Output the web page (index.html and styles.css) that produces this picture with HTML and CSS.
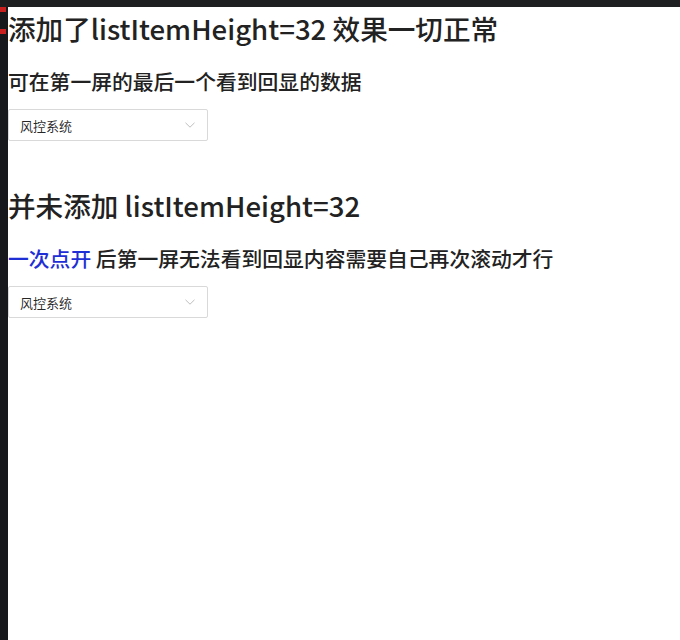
FILE: index.html
```html
<!DOCTYPE html>
<html lang="zh-CN">
<head>
    <meta charset="UTF-8">
    <meta name="viewport" content="width=device-width, initial-scale=1.0">
    <title>listItemHeight demo</title>
    <link rel="stylesheet" href="styles.css">
</head>
<body>
    <div class="top-bar"></div>

    <div class="frame">
        <div class="side-rail">
            <span class="rail-mark rail-mark-first"></span>
            <span class="rail-mark"></span>
        </div>

        <div class="main">
            <h2 class="demo-title">添加了listItemHeight=32 效果一切正常</h2>
            <h3 class="demo-desc">可在第一屏的最后一个看到回显的数据</h3>
            <div class="select">
                <span class="select-value">风控系统</span>
                <svg class="select-arrow" width="12" height="12" viewBox="0 0 12 12">
                    <path d="M1.5 3.8 L6 8.2 L10.5 3.8" fill="none" stroke="#bfbfbf" stroke-width="1"/>
                </svg>
            </div>

            <h2 class="demo-title demo-title-second">并未添加 listItemHeight=32</h2>
            <h3 class="demo-desc"><span class="highlight">一次点开</span> 后第一屏无法看到回显内容需要自己再次滚动才行</h3>
            <div class="select">
                <span class="select-value">风控系统</span>
                <svg class="select-arrow" width="12" height="12" viewBox="0 0 12 12">
                    <path d="M1.5 3.8 L6 8.2 L10.5 3.8" fill="none" stroke="#bfbfbf" stroke-width="1"/>
                </svg>
            </div>
        </div>
    </div>
</body>
</html>
```

FILE: styles.css
```css
html, body {
    height: 100%;
}

body {
    margin: 0;
    padding: 0;
    background: #1e1f21;
    font-family: "Noto Sans CJK SC", "Noto Sans", sans-serif;
    color: #262626;
    display: flex;
    flex-direction: column;
    overflow: hidden;
}

.top-bar {
    height: 7px;
    background: #1e1f21;
}

.frame {
    flex: 1;
    display: flex;
}

.side-rail {
    width: 8px;
    background: #16181b;
    display: flex;
    flex-direction: column;
}

.rail-mark {
    display: block;
    width: 6px;
    height: 5px;
    background: #c8201e;
}

.rail-mark-first {
    margin-bottom: 17px;
}

.main {
    flex: 1;
    background: #fff;
}

.demo-title {
    font-size: 27.6px;
    font-weight: 500;
    line-height: 36px;
    margin: 3px 0 0;
    color: #222;
}

.demo-title-second {
    margin-top: 46px;
}

.demo-desc {
    font-size: 20.8px;
    font-weight: 500;
    line-height: 28px;
    margin: 21px 0 14px;
    color: #222;
}

.highlight {
    color: #1f2fd6;
}

.select {
    width: 200px;
    height: 32px;
    box-sizing: border-box;
    border: 1px solid #d9d9d9;
    border-radius: 2px;
    display: flex;
    align-items: center;
    justify-content: space-between;
    padding: 0 11px;
    font-size: 13px;
    color: rgba(0, 0, 0, 0.85);
}

.select-arrow {
    display: block;
}
```
